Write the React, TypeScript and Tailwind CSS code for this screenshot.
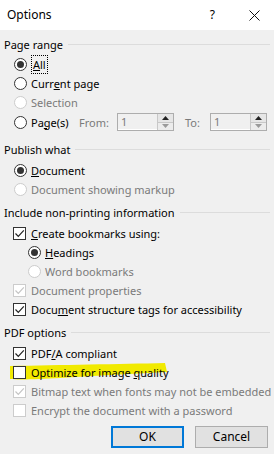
import React from "react";

const font = { fontFamily: '"Noto Sans", "Open Sans", sans-serif' };

function Check({ checked = false, disabled = false }: { checked?: boolean; disabled?: boolean }) {
  return (
    <span
      className={`w-[13px] h-[13px] border bg-white flex items-center justify-center shrink-0 ${
        disabled ? "border-[#cccccc]" : "border-[#333333]"
      }`}
    >
      {checked && (
        <svg width="11" height="11" viewBox="0 0 11 11">
          <path
            d="M1.5 5.5 L4.3 8.3 L9.8 2.3"
            fill="none"
            stroke={disabled ? "#c4c4c4" : "#222"}
            strokeWidth="1.2"
          />
        </svg>
      )}
    </span>
  );
}

function Radio({ checked = false, disabled = false }: { checked?: boolean; disabled?: boolean }) {
  return (
    <span
      className={`w-[13px] h-[13px] rounded-full border bg-white flex items-center justify-center shrink-0 ${
        disabled ? "border-[#cccccc]" : "border-[#333333]"
      }`}
    >
      {checked && <span className="w-[7px] h-[7px] rounded-full bg-[#333333]" />}
    </span>
  );
}

function Heading({ label, className }: { label: string; className: string }) {
  return (
    <div className={`flex items-center h-[20px] pl-[4px] pr-[4px] ${className}`}>
      <span className="text-black whitespace-nowrap">{label}</span>
      <span className="flex-1 h-px bg-[#dcdcdc] ml-[5px]" />
    </div>
  );
}

function Row({
  kind,
  checked,
  disabled,
  indent = false,
  h = "h-[19px]",
  children,
}: {
  kind: "check" | "radio";
  checked?: boolean;
  disabled?: boolean;
  indent?: boolean;
  h?: string;
  children: React.ReactNode;
}) {
  return (
    <div
      className={`flex items-center whitespace-nowrap ${h} ${
        indent ? "pl-[28px]" : kind === "radio" ? "pl-[14px]" : "pl-[13px]"
      } ${disabled ? "text-[#7a7a7a]" : "text-black"}`}
    >
      {kind === "check" ? <Check checked={checked} disabled={disabled} /> : <Radio checked={checked} disabled={disabled} />}
      <span className={kind === "check" ? "ml-[5px]" : "ml-[4px]"}>{children}</span>
    </div>
  );
}

function Spin() {
  return (
    <div className="flex w-[57px] h-[18px] border border-[#adadad] bg-[#f0f0f0]">
      <span className="flex-1 pl-[3px] text-[#7a7a7a] leading-[16px] border-b border-white">1</span>
      <div className="w-[16px] flex flex-col border-l border-[#c8c8c8]">
        <div className="flex-1 flex items-center justify-center bg-[#e6e6e6] border-b border-[#c8c8c8]">
          <svg width="7" height="4" viewBox="0 0 7 4">
            <path d="M0 4 L3.5 0 L7 4 Z" fill="#222" />
          </svg>
        </div>
        <div className="flex-1 flex items-center justify-center bg-[#ececec]">
          <svg width="7" height="4" viewBox="0 0 7 4">
            <path d="M0 0 L3.5 4 L7 0 Z" fill="#9a9a9a" />
          </svg>
        </div>
      </div>
    </div>
  );
}

export default function App() {
  return (
    <div className="w-[274px] h-[454px] bg-[#f0f0f0] text-[11px] leading-none relative overflow-hidden" style={font}>
      <div className="h-[30px] bg-white flex items-center pl-[7px] pr-[14px] text-black">
        <span className="text-[12px]">Options</span>
        <span className="ml-auto text-[12px] mr-[34px]">?</span>
        <svg width="11" height="11" viewBox="0 0 11 11">
          <path d="M0.5 0.5 L10.5 10.5 M10.5 0.5 L0.5 10.5" stroke="#111" strokeWidth="1" />
        </svg>
      </div>

      <svg className="absolute left-0 top-0 pointer-events-none" width="274" height="454" viewBox="0 0 274 454">
        <path
          d="M10 366 C60 365 120 364 165 363 L167 372 C130 374 90 376 60 378 C40 379 20 380 10 379 Z"
          fill="#f1ea00"
        />
      </svg>

      <div className="relative flex flex-col">
        <Heading label="Page range" className="mt-[4px]" />
        <Row kind="radio" checked h="h-[20px]">
          <span className="border border-dotted border-black px-px py-px">
            <u>A</u>ll
          </span>
        </Row>
        <Row kind="radio">
          Curr<u>e</u>nt page
        </Row>
        <Row kind="radio" disabled>
          Selection
        </Row>
        <div className="flex items-center h-[20px] pl-[14px] whitespace-nowrap">
          <Radio />
          <span className="ml-[4px] w-[48px]">
            Pa<u>g</u>e(s)
          </span>
          <span className="text-[#7a7a7a] w-[38px]">From:</span>
          <Spin />
          <span className="text-[#7a7a7a] ml-[11px] w-[25px]">To:</span>
          <Spin />
        </div>

        <Heading label="Publish what" className="mt-[7px]" />
        <Row kind="radio" checked h="h-[20px] mt-[1px]">
          <u>D</u>ocument
        </Row>
        <Row kind="radio" disabled>
          Document showing markup
        </Row>

        <Heading label="Include non-printing information" className="mt-[3px]" />
        <Row kind="check" checked h="h-[20px] mt-[1px]">
          <u>C</u>reate bookmarks using:
        </Row>
        <Row kind="radio" checked indent>
          <u>H</u>eadings
        </Row>
        <Row kind="radio" disabled indent>
          Word bookmarks
        </Row>
        <Row kind="check" checked disabled>
          Document properties
        </Row>
        <Row kind="check" checked>
          Docu<u>m</u>ent structure tags for accessibility
        </Row>

        <Heading label="PDF options" className="mt-[3px]" />
        <Row kind="check" checked h="h-[20px] mt-[1px]">
          PDF<u>/</u>A compliant
        </Row>
        <Row kind="check">
          Optimize for image <u>q</u>uality
        </Row>
        <Row kind="check" checked disabled>
          Bitmap text when fonts may not be embedded
        </Row>
        <Row kind="check" disabled>
          Encrypt the document with a password
        </Row>

        <div className="flex justify-end gap-[11px] pr-[6px] mt-[6px]">
          <button className="w-[73px] h-[22px] bg-[#e1e1e1] border-2 border-[#0078d7] text-black text-[12px]">OK</button>
          <button className="w-[73px] h-[22px] bg-[#e1e1e1] border border-[#adadad] text-black text-[12px]">Cancel</button>
        </div>
      </div>
    </div>
  );
}
